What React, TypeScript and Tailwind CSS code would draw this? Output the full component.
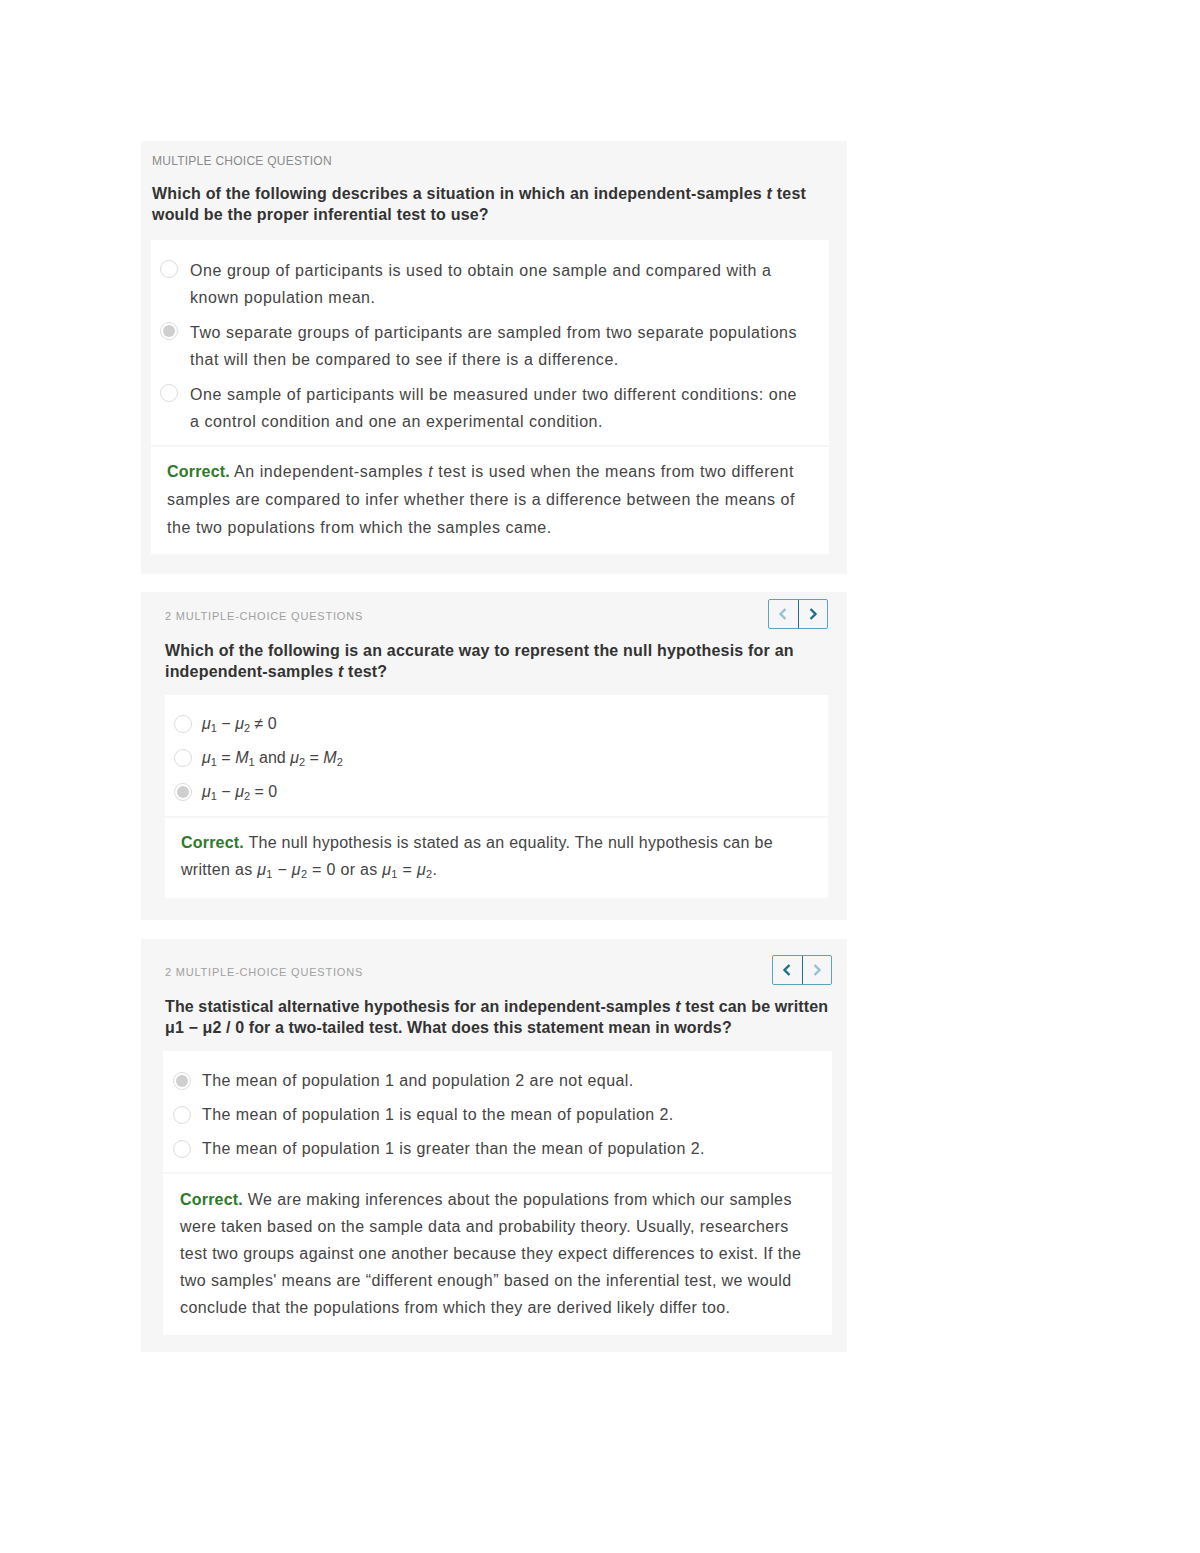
import React from "react";

function Radio({ checked }: { checked?: boolean }) {
  return (
    <span className="flex h-[18px] w-[18px] shrink-0 items-center justify-center rounded-full border border-[#dcdcdc] bg-white">
      {checked ? <span className="h-[12px] w-[12px] rounded-full bg-[#cfcfcf]" /> : null}
    </span>
  );
}

function Nav({ active }: { active: "left" | "right" }) {
  const dark = "#1d6f8c";
  const light = "#8fc3d5";
  return (
    <div className="flex h-[30px] w-[60px] rounded-[2px] border border-[#5aa3bd]">
      <div className="flex flex-1 items-center justify-center border-r border-[#1d6f8c]">
        <svg width="10" height="14" viewBox="0 0 10 14">
          <path d="M7.5 2 L2.5 7 L7.5 12" fill="none" stroke={active === "left" ? dark : light} strokeWidth="2.4" />
        </svg>
      </div>
      <div className="flex flex-1 items-center justify-center">
        <svg width="10" height="14" viewBox="0 0 10 14">
          <path d="M2.5 2 L7.5 7 L2.5 12" fill="none" stroke={active === "right" ? dark : light} strokeWidth="2.4" />
        </svg>
      </div>
    </div>
  );
}

const Mu = ({ n }: { n: string }) => (
  <span>
    <i>μ</i>
    <sub className="text-[11px]">{n}</sub>
  </span>
);

export default function App() {
  return (
    <div className="min-h-[1553px] bg-white pt-[141px] font-['Liberation_Sans',Arial,sans-serif] text-[#444]">
      {/* Card 1 */}
      <div className="ml-[141px] w-[706px] bg-[#f6f6f6] pb-[20px] pt-[14px]">
        <div className="px-[11px] text-[12px] leading-[12px] tracking-[0.25px] text-[#8a8a8a]">MULTIPLE CHOICE QUESTION</div>
        <div className="mt-[16px] whitespace-nowrap px-[11px] text-[16px] font-bold leading-[21px] tracking-[0.2px] text-[#333]">
          Which of the following describes a situation in which an independent-samples <i>t</i> test
          <br />
          would be the proper inferential test to use?
        </div>
        <div className="ml-[10px] mr-[18px] mt-[15px]">
          <div className="flex flex-col gap-[8px] bg-white pb-[10px] pl-[9px] pt-[17px] text-[16px] leading-[27px] tracking-[0.55px]">
            <div className="flex items-start gap-[12px]">
              <span className="mt-[3px]"><Radio /></span>
              <span>One group of participants is used to obtain one sample and compared with a<br />known population mean.</span>
            </div>
            <div className="flex items-start gap-[12px]">
              <span className="mt-[3px]"><Radio checked /></span>
              <span>Two separate groups of participants are sampled from two separate populations<br />that will then be compared to see if there is a difference.</span>
            </div>
            <div className="flex items-start gap-[12px]">
              <span className="mt-[3px]"><Radio /></span>
              <span>One sample of participants will be measured under two different conditions: one<br />a control condition and one an experimental condition.</span>
            </div>
          </div>
          <div className="mt-[2px] bg-white pb-[12px] pl-[16px] pt-[11px] text-[16px] leading-[28px] tracking-[0.55px]">
            <span className="font-bold tracking-[0.2px] text-[#2f7a2a]">Correct.</span> An independent-samples <i>t</i> test is used when the means from two different
            <br />
            samples are compared to infer whether there is a difference between the means of
            <br />
            the two populations from which the samples came.
          </div>
        </div>
      </div>

      {/* Card 2 */}
      <div className="ml-[141px] mt-[18px] w-[706px] bg-[#f6f6f6] pb-[22px] pt-[7px]">
        <div className="flex items-start justify-between pl-[24px] pr-[19px]">
          <div className="mt-[12px] text-[11px] leading-[11px] tracking-[0.8px] text-[#a0a0a0]">2 MULTIPLE-CHOICE QUESTIONS</div>
          <Nav active="right" />
        </div>
        <div className="mt-[11px] whitespace-nowrap px-[24px] text-[16px] font-bold leading-[21px] tracking-[0.2px] text-[#333]">
          Which of the following is an accurate way to represent the null hypothesis for an
          <br />
          independent-samples <i>t</i> test?
        </div>
        <div className="ml-[24px] mr-[19px] mt-[13px]">
          <div className="flex flex-col gap-[10px] bg-white pb-[12px] pl-[9px] pt-[17px] text-[16px] leading-[24px]">
            <div className="flex items-center gap-[10px]">
              <Radio />
              <span><Mu n="1" /> − <Mu n="2" /> ≠ 0</span>
            </div>
            <div className="flex items-center gap-[10px]">
              <Radio />
              <span><Mu n="1" /> = <i>M</i><sub className="text-[11px]">1</sub> and <Mu n="2" /> = <i>M</i><sub className="text-[11px]">2</sub></span>
            </div>
            <div className="flex items-center gap-[10px]">
              <Radio checked />
              <span><Mu n="1" /> − <Mu n="2" /> = 0</span>
            </div>
          </div>
          <div className="mt-[2px] bg-white pb-[15px] pl-[16px] pt-[11px] text-[16px] leading-[27px] tracking-[0.3px]">
            <span className="font-bold tracking-[0.2px] text-[#2f7a2a]">Correct.</span> The null hypothesis is stated as an equality. The null hypothesis can be
            <br />
            written as <Mu n="1" /> − <Mu n="2" /> = 0 or as <Mu n="1" /> = <Mu n="2" />.
          </div>
        </div>
      </div>

      {/* Card 3 */}
      <div className="ml-[141px] mt-[19px] w-[706px] bg-[#f6f6f6] pb-[17px] pt-[16px]">
        <div className="flex items-start justify-between pl-[24px] pr-[15px]">
          <div className="mt-[12px] text-[11px] leading-[11px] tracking-[0.8px] text-[#a0a0a0]">2 MULTIPLE-CHOICE QUESTIONS</div>
          <Nav active="left" />
        </div>
        <div className="mt-[11px] whitespace-nowrap pl-[24px] pr-[4px] text-[16px] font-bold leading-[21px] tracking-[0.12px] text-[#333]">
          The statistical alternative hypothesis for an independent-samples <i>t</i> test can be written
          <br />
          μ1 − μ2 / 0 for a two-tailed test. What does this statement mean in words?
        </div>
        <div className="ml-[22px] mr-[15px] mt-[13px]">
          <div className="flex flex-col gap-[10px] bg-white pb-[11px] pl-[10px] pt-[18px] text-[16px] leading-[24px] tracking-[0.45px]">
            <div className="flex items-center gap-[11px]">
              <Radio checked />
              <span>The mean of population 1 and population 2 are not equal.</span>
            </div>
            <div className="flex items-center gap-[11px]">
              <Radio />
              <span>The mean of population 1 is equal to the mean of population 2.</span>
            </div>
            <div className="flex items-center gap-[11px]">
              <Radio />
              <span>The mean of population 1 is greater than the mean of population 2.</span>
            </div>
          </div>
          <div className="mt-[2px] bg-white pb-[14px] pl-[17px] pt-[12px] text-[16px] leading-[27px] tracking-[0.4px]">
            <span className="font-bold tracking-[0.2px] text-[#2f7a2a]">Correct.</span> We are making inferences about the populations from which our samples
            <br />
            were taken based on the sample data and probability theory. Usually, researchers
            <br />
            test two groups against one another because they expect differences to exist. If the
            <br />
            two samples' means are “different enough” based on the inferential test, we would
            <br />
            conclude that the populations from which they are derived likely differ too.
          </div>
        </div>
      </div>
    </div>
  );
}
